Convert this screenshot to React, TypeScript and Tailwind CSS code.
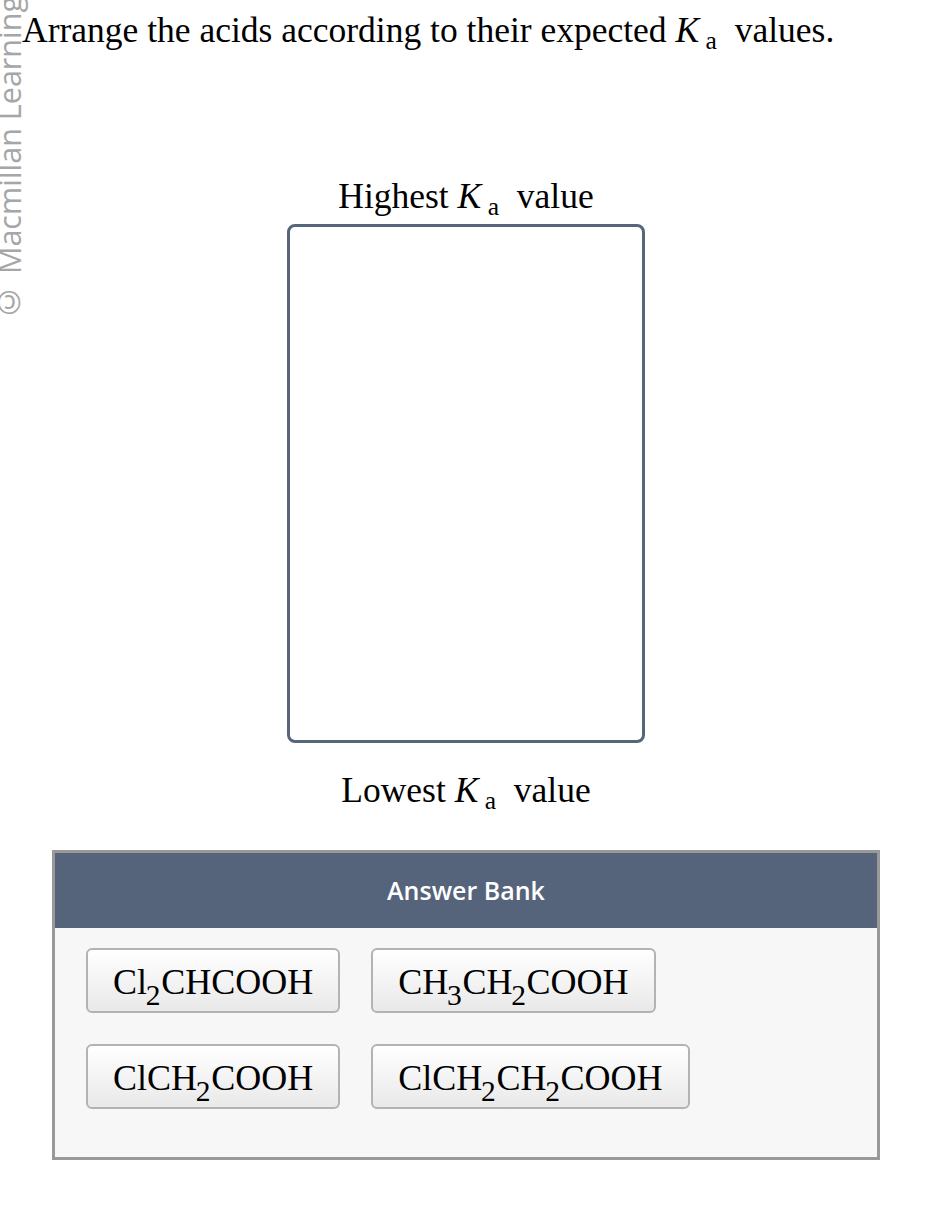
import React from "react";

const serif = { fontFamily: '"Liberation Serif", "Times New Roman", serif' };
const sans = { fontFamily: '"Open Sans", "Liberation Sans", sans-serif' };

function Ka() {
  return (
    <span className="whitespace-nowrap">
      <i>K</i>
      <span className="relative top-[0.28em] ml-[0.25em] mr-[0.35em] text-[0.72em]">a</span>
    </span>
  );
}

function Sub({ children }: { children: React.ReactNode }) {
  return (
    <span className="relative top-[0.38em] -ml-[0.04em] mr-[0.02em] text-[0.82em] leading-none">
      {children}
    </span>
  );
}

function Chip({ children }: { children: React.ReactNode }) {
  return (
    <div
      className="flex h-[65px] items-center rounded-[6px] border-2 border-[#b3b3b3] bg-gradient-to-b from-white to-[#e9e9e9] px-[25px] pt-[2px] text-[36px] leading-none text-black"
      style={serif}
    >
      <span>{children}</span>
    </div>
  );
}

export default function App() {
  return (
    <div className="relative min-h-[1226px] w-[928px] bg-white text-black">
      {/* vertical copyright strip along the left edge */}
      <div
        className="absolute left-[-6px] top-[-4px] whitespace-nowrap text-[30.5px] leading-none text-[#a6a6a6] [writing-mode:vertical-rl] rotate-180"
        style={sans}
      >
        © Macmillan Learning
      </div>

      <p className="relative pl-[22px] pt-[10px] text-[35.5px] leading-[40px]" style={serif}>
        Arrange the acids according to their expected <Ka /> values.
      </p>

      <div className="ml-[52px] w-[828px]">
        <div className="flex flex-col items-center">
          <div className="mt-[122px] text-[35.5px] leading-[40px]" style={serif}>
            Highest <Ka /> value
          </div>
          <div className="mt-[4px] h-[519px] w-[358px] rounded-[8px] border-[3px] border-[#56657a]" />
          <div className="mt-[27px] text-[35.5px] leading-[40px]" style={serif}>
            Lowest <Ka /> value
          </div>
        </div>

        <div className="mt-[36px] border-[3px] border-[#999999] bg-[#f7f7f7]">
          <div
            className="flex h-[75px] items-center justify-center bg-[#55647a] text-[25px] font-semibold text-white"
            style={sans}
          >
            Answer Bank
          </div>
          <div className="flex flex-col gap-[31px] px-[31px] pb-[48px] pt-[20px]">
            <div className="flex gap-[31px]">
              <Chip>
                Cl<Sub>2</Sub>CHCOOH
              </Chip>
              <Chip>
                CH<Sub>3</Sub>CH<Sub>2</Sub>COOH
              </Chip>
            </div>
            <div className="flex gap-[31px]">
              <Chip>
                ClCH<Sub>2</Sub>COOH
              </Chip>
              <Chip>
                ClCH<Sub>2</Sub>CH<Sub>2</Sub>COOH
              </Chip>
            </div>
          </div>
        </div>
      </div>
    </div>
  );
}
